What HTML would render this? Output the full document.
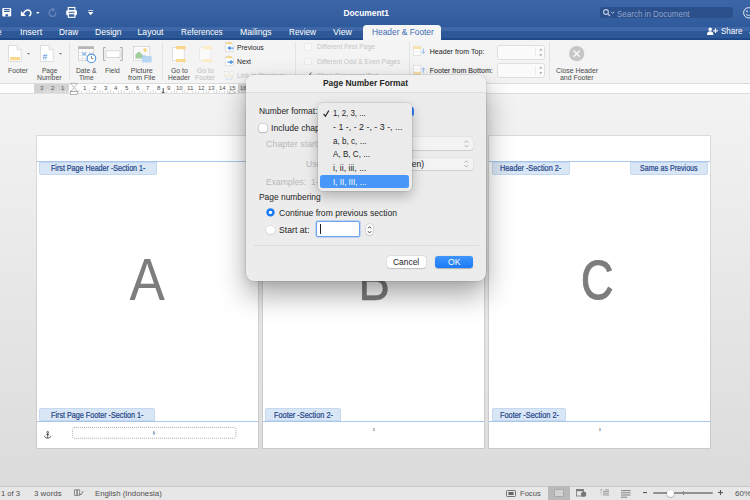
<!DOCTYPE html>
<html lang="en">
<head>
<meta charset="utf-8">
<title>Document1</title>
<style>
*{box-sizing:border-box;margin:0;padding:0}
html,body{width:750px;height:500px;overflow:hidden}
body{position:relative;background:linear-gradient(#f3f3f3 94px,#dbdbdb 486px);font-family:"Liberation Sans",sans-serif;font-size:9px;color:#222}
.abs{position:absolute}
svg{position:absolute;overflow:visible}
.t{position:absolute;white-space:pre;transform-origin:0 50%}
</style>
</head>
<body>
<div class="abs" style="left:0px;top:0px;width:750px;height:27.4px;background:linear-gradient(#3d66a8,#355f9f 62%,#2e5a9c);"></div>
<div class="abs" style="left:0px;top:27.4px;width:750px;height:12.4px;background:linear-gradient(#4068a8 0,#4068a8 3.6px,#2c5898 4px,#2c5898 11px,#1f4888 11.4px);"></div>
<div class="abs" style="left:363px;top:24.5px;width:78.2px;height:16px;background:#f5f5f5;border-radius:3.5px 3.5px 0 0"></div>
<svg style="left:0px;top:0px" width="40" height="24" viewBox="0 0 40 24"><rect x="2.3" y="8" width="8.9" height="8.5" rx="1.2" fill="#fff"/><rect x="4" y="8.9" width="5.7" height="3.1" fill="#3761a2"/><rect x="4" y="10" width="5.7" height="0.8" fill="#dfe6f2"/><rect x="5.4" y="14.2" width="2.8" height="2.3" fill="#3761a2"/></svg>
<svg style="left:0px;top:0px" width="60" height="24" viewBox="0 0 60 24"><path d="M20.9 10.9v5.2h5.2z" fill="#fff"/><path d="M23.4 13.6C24.6 10.4 28.2 8.8 30.2 11.2c1.4 1.8 0.6 3.8-1 4.8" fill="none" stroke="#fff" stroke-width="1.5"/></svg>
<svg style="left:35.6px;top:11.6px" width="3.6" height="2" viewBox="0 0 3.6 2"><path d="M0 0h3.6L1.8 2z" fill="#fff"/></svg>
<svg style="left:0px;top:0px" width="80" height="24" viewBox="0 0 80 24"><path d="M52.6 9.6A3.4 3.4 0 1 0 55.8 12.4" fill="none" stroke="#6c89bd" stroke-width="1.2"/><path d="M51.6 8.2l2.6 1.3-1.4 2.3" fill="none" stroke="#6c89bd" stroke-width="1.1"/></svg>
<svg style="left:0px;top:0px" width="100" height="24" viewBox="0 0 100 24"><rect x="66.2" y="9.9" width="10.8" height="5.6" rx="1.7" fill="#fff"/><rect x="68.3" y="7.5" width="6.6" height="3" fill="#3962a3" stroke="#fff" stroke-width="1.1"/><rect x="68.6" y="11.7" width="6" height="1.1" fill="#3962a3"/><rect x="68.3" y="13.7" width="6.6" height="3.6" fill="#3962a3" stroke="#fff" stroke-width="1.1"/></svg>
<svg style="left:88px;top:9.7px" width="5.4" height="5.4" viewBox="0 0 5.4 5.4"><rect x="0.2" y="0" width="5" height="1" fill="#c9d3e6"/><path d="M0 2h5.4L2.7 5.2z" fill="#fff"/></svg>
<span class="t" style="left:343.4px;top:7.66px;font-size:8.4px;line-height:10.08px;color:#ffffff;font-weight:bold;">Document1</span>
<div class="abs" style="left:599.5px;top:7px;width:133.5px;height:11.4px;background:#2c508c;border-radius:2.5px"></div>
<svg style="left:602.6px;top:8.8px" width="12" height="8" viewBox="0 0 12 8"><circle cx="3" cy="3" r="2.4" fill="none" stroke="#c3cee4" stroke-width="1.1"/><path d="M4.8 4.8L7 7" stroke="#c3cee4" stroke-width="1.2"/><path d="M8.2 2.8l1.5 1.6 1.5-1.6" fill="none" stroke="#c3cee4" stroke-width="0.9"/></svg>
<span class="t" style="left:617px;top:8.66px;font-size:8.4px;line-height:10.08px;color:#90a5cb;transform:scaleX(0.9566);">Search in Document</span>
<svg style="left:742.5px;top:6.6px" width="12" height="12" viewBox="0 0 12 12"><circle cx="5.8" cy="5.8" r="5.2" fill="none" stroke="#e8edf6" stroke-width="1"/><circle cx="4" cy="4.4" r="0.8" fill="#e8edf6"/><path d="M2.8 7c1.2 1.6 3.4 1.8 5 0.6" fill="none" stroke="#e8edf6" stroke-width="0.9"/></svg>
<span class="t" style="left:-3px;top:27.34px;font-size:8.6px;line-height:10.32px;color:#ffffff;transform:scaleX(0.9621);">e</span>
<span class="t" style="left:19.6px;top:27.34px;font-size:8.6px;line-height:10.32px;color:#ffffff;transform:scaleX(1.0279);">Insert</span>
<span class="t" style="left:58.5px;top:27.34px;font-size:8.6px;line-height:10.32px;color:#ffffff;transform:scaleX(0.9620);">Draw</span>
<span class="t" style="left:94.5px;top:27.34px;font-size:8.6px;line-height:10.32px;color:#ffffff;transform:scaleX(0.9901);">Design</span>
<span class="t" style="left:137.6px;top:27.34px;font-size:8.6px;line-height:10.32px;color:#ffffff;">Layout</span>
<span class="t" style="left:181.3px;top:27.34px;font-size:8.6px;line-height:10.32px;color:#ffffff;transform:scaleX(0.9487);">References</span>
<span class="t" style="left:240px;top:27.34px;font-size:8.6px;line-height:10.32px;color:#ffffff;transform:scaleX(1.0054);">Mailings</span>
<span class="t" style="left:289px;top:27.34px;font-size:8.6px;line-height:10.32px;color:#ffffff;transform:scaleX(0.9579);">Review</span>
<span class="t" style="left:333.3px;top:27.34px;font-size:8.6px;line-height:10.32px;color:#ffffff;transform:scaleX(1.0279);">View</span>
<span class="t" style="left:372px;top:27.3px;font-size:8.5px;line-height:10.2px;color:#3d6bb3;transform:scaleX(0.9834);">Header &amp; Footer</span>
<svg style="left:0px;top:0px" width="750" height="40" viewBox="0 0 750 40"><circle cx="710.2" cy="29.2" r="1.7" fill="#fff"/><path d="M707 34.9c0-2.6 1.2-3.7 3.2-3.7s3.2 1.1 3.2 3.7z" fill="#fff"/><path d="M715.5 28.5v4.6M713.2 30.8h4.6" stroke="#fff" stroke-width="1.2"/></svg>
<span class="t" style="left:720.6px;top:26.04px;font-size:8.6px;line-height:10.32px;color:#ffffff;transform:scaleX(0.9330);">Share</span>
<svg style="left:748.6px;top:29.6px" width="5" height="4" viewBox="0 0 5 4"><path d="M0.4 3.2L2.6 0.8 4.8 3.2" fill="none" stroke="#fff" stroke-width="0.9"/></svg>
<div class="abs" style="left:0px;top:39.6px;width:750px;height:44.4px;background:#f4f4f4;border-bottom:1px solid #dcdcdc"></div>
<div class="abs" style="left:69.3px;top:42px;width:1px;height:37.5px;background:#e3e3e3;"></div>
<div class="abs" style="left:162px;top:42px;width:1px;height:37.5px;background:#e3e3e3;"></div>
<div class="abs" style="left:295.4px;top:42px;width:1px;height:37.5px;background:#e3e3e3;"></div>
<div class="abs" style="left:409px;top:42px;width:1px;height:37.5px;background:#e3e3e3;"></div>
<div class="abs" style="left:549.3px;top:42px;width:1px;height:37.5px;background:#e3e3e3;"></div>
<svg style="left:8.2px;top:45.2px" width="14" height="17" viewBox="0 0 14 17"><path d="M0.5 0.5h8.5l4.3 4.3v11.7H0.5z" fill="#fff" stroke="#d9d9d9" stroke-width="0.9"/><path d="M9 0.5v4.3h4.3" fill="#f3f3f3" stroke="#d9d9d9" stroke-width="0.8"/><rect x="2" y="12" width="10" height="3.2" fill="#f8d88a"/></svg>
<svg style="left:27.3px;top:52.6px" width="3" height="1.7" viewBox="0 0 3 1.7"><path d="M0 0h3L1.5 1.7z" fill="#777"/></svg>
<span class="t" style="left:7.7px;top:66.94px;font-size:7.1px;line-height:8.52px;color:#4a4a4a;transform:scaleX(0.9700);">Footer</span>
<svg style="left:40px;top:45.2px" width="14" height="17" viewBox="0 0 14 17"><path d="M0.5 0.5h8.5l4.3 4.3v11.7H0.5z" fill="#fff" stroke="#d9d9d9" stroke-width="0.9"/><path d="M9 0.5v4.3h4.3" fill="#f3f3f3" stroke="#d9d9d9" stroke-width="0.8"/><text x="2.6" y="15" font-family="Liberation Sans,sans-serif" font-size="8.5" fill="#4a90e2">#</text></svg>
<svg style="left:59px;top:52.6px" width="3" height="1.7" viewBox="0 0 3 1.7"><path d="M0 0h3L1.5 1.7z" fill="#777"/></svg>
<span class="t" style="left:41.7px;top:66.94px;font-size:7.1px;line-height:8.52px;color:#4a4a4a;transform:scaleX(0.9229);">Page</span>
<span class="t" style="left:37px;top:73.74px;font-size:7.1px;line-height:8.52px;color:#4a4a4a;transform:scaleX(0.9749);">Number</span>
<svg style="left:78.3px;top:46px" width="18" height="17" viewBox="0 0 18 17"><rect x="0.4" y="0.4" width="15.2" height="14" fill="#fff" stroke="#cfcfcf" stroke-width="0.8"/><rect x="0.4" y="0.4" width="15.2" height="2.6" fill="#b5b5b5"/><path d="M0.4 6.4h15.2M0.4 9.6h15.2M0.4 12.6h15.2M4.2 3v11.4M8 3v11.4M11.8 3v11.4" stroke="#d8d8d8" stroke-width="0.6"/><rect x="4.4" y="6.6" width="3.4" height="2.8" fill="#8fbcf0"/><circle cx="13.4" cy="12.4" r="4.3" fill="#fff" stroke="#4a90e2" stroke-width="1.1"/><path d="M13.4 10v2.6h2" fill="none" stroke="#666" stroke-width="0.8"/></svg>
<span class="t" style="left:75.7px;top:66.94px;font-size:7.1px;line-height:8.52px;color:#4a4a4a;transform:scaleX(0.9499);">Date &amp;</span>
<span class="t" style="left:79px;top:73.74px;font-size:7.1px;line-height:8.52px;color:#4a4a4a;transform:scaleX(0.9474);">Time</span>
<svg style="left:103.3px;top:46.7px" width="20" height="14" viewBox="0 0 20 14"><path d="M2.6 0.5H0.6v13h2M17.2 0.5h2v13h-2" fill="none" stroke="#a8a8a8" stroke-width="1"/><rect x="3" y="3.8" width="14" height="6.8" fill="#fff" stroke="#cfcfcf" stroke-width="0.8"/></svg>
<span class="t" style="left:105.3px;top:66.94px;font-size:7.1px;line-height:8.52px;color:#4a4a4a;transform:scaleX(0.9551);">Field</span>
<svg style="left:132.6px;top:46.4px" width="19" height="17" viewBox="0 0 19 17"><rect x="0.4" y="0.4" width="16.4" height="13.8" fill="#fff" stroke="#d4d4d4" stroke-width="0.8"/><rect x="1.6" y="1.6" width="14" height="11.4" fill="#f7f7f7"/><path d="M2.4 12.6V8.6l3.6-3 3.4 3v4z" fill="#9fcf9a"/><circle cx="12" cy="4" r="1.7" fill="#f7d070"/><path d="M9 9.2h3.2l0.8 1h5.4v6H9z" fill="#a9cdf0"/><path d="M9 10.8h9.4v5.4H9z" fill="#b9d7f3"/></svg>
<span class="t" style="left:130.7px;top:66.94px;font-size:7.1px;line-height:8.52px;color:#4a4a4a;">Picture</span>
<span class="t" style="left:128px;top:73.74px;font-size:7.1px;line-height:8.52px;color:#4a4a4a;transform:scaleX(0.9894);">from File</span>
<svg style="left:172.3px;top:45.6px" width="14" height="16.4" viewBox="0 0 14 16.4"><rect x="0.4" y="1.4" width="11.8" height="13" fill="#fff" stroke="#d9d9d9" stroke-width="0.8"/><rect x="4" y="0" width="9.7" height="3.3" fill="#f8d88a"/><rect x="4" y="13.1" width="9.7" height="3" fill="#f8d88a"/></svg>
<span class="t" style="left:170.7px;top:66.94px;font-size:7.1px;line-height:8.52px;color:#4a4a4a;transform:scaleX(0.9620);">Go to</span>
<span class="t" style="left:168px;top:73.74px;font-size:7.1px;line-height:8.52px;color:#4a4a4a;transform:scaleX(0.9450);">Header</span>
<svg style="left:199.4px;top:45.6px" width="14" height="16.4" viewBox="0 0 14 16.4"><rect x="0.4" y="1.4" width="11.4" height="13" fill="#fafafa" stroke="#e8e8e8" stroke-width="0.8"/><rect x="3.8" y="0" width="9.6" height="3.3" fill="#fbedc8"/><rect x="3.8" y="13.1" width="9.6" height="3" fill="#fbedc8"/></svg>
<span class="t" style="left:196.7px;top:66.94px;font-size:7.1px;line-height:8.52px;color:#bdbdbd;">Go to</span>
<span class="t" style="left:195.4px;top:73.74px;font-size:7.1px;line-height:8.52px;color:#bdbdbd;transform:scaleX(0.9700);">Footer</span>
<svg style="left:224.7px;top:42px" width="9" height="10" viewBox="0 0 9 10"><path d="M0.4 0.4h5.4l2.4 2.4v6.8H0.4z" fill="#fff" stroke="#d4d4d4" stroke-width="0.7"/><rect x="1.4" y="0.4" width="5.6" height="1.8" fill="#f7d37a"/><path d="M8.4 6.8H5.4v1.7L2.2 6.1l3.2-2.4v1.7h3z" fill="#4a90e2"/></svg>
<span class="t" style="left:237.3px;top:43.54px;font-size:7.1px;line-height:8.52px;color:#262626;transform:scaleX(0.9671);">Previous</span>
<svg style="left:224.7px;top:56px" width="9" height="10" viewBox="0 0 9 10"><path d="M0.4 0.4h5.4l2.4 2.4v6.8H0.4z" fill="#fff" stroke="#d4d4d4" stroke-width="0.7"/><rect x="1.4" y="0.4" width="5.6" height="1.8" fill="#f7d37a"/><path d="M2.4 6.8h3v1.7l3.2-2.4-3.2-2.4v1.7h-3z" fill="#4a90e2"/></svg>
<span class="t" style="left:237.3px;top:58.04px;font-size:7.1px;line-height:8.52px;color:#262626;transform:scaleX(0.9593);">Next</span>
<svg style="left:224px;top:71.4px" width="10" height="9" viewBox="0 0 10 9"><rect x="0.4" y="0.4" width="3.6" height="5" fill="#fafafa" stroke="#e4e4e4" stroke-width="0.7"/><rect x="6" y="0.4" width="3.6" height="5" fill="#fafafa" stroke="#e4e4e4" stroke-width="0.7"/><rect x="0.8" y="3.4" width="2.8" height="1.4" fill="#fbecc4"/><rect x="6.4" y="3.4" width="2.8" height="1.4" fill="#fbecc4"/><path d="M2.2 6v2.4h5.6V6" fill="none" stroke="#c9def5" stroke-width="0.7"/></svg>
<span class="t" style="left:237.3px;top:71.94px;font-size:7.1px;line-height:8.52px;color:#c4c4c4;transform:scaleX(0.9448);">Link to Previous</span>
<div class="abs" style="left:304.3px;top:43.2px;width:8px;height:7.6px;background:#f8f8f8;border:0.8px solid #ebebeb;border-radius:1.5px"></div>
<div class="abs" style="left:304.3px;top:57.5px;width:8px;height:7.6px;background:#f8f8f8;border:0.8px solid #ebebeb;border-radius:1.5px"></div>
<div class="abs" style="left:304.3px;top:71.9px;width:8px;height:7.6px;background:#f8f8f8;border:0.8px solid #ebebeb;border-radius:1.5px"></div>
<span class="t" style="left:317px;top:43.34px;font-size:7.1px;line-height:8.52px;color:#c4c4c4;transform:scaleX(0.9511);">Different First Page</span>
<span class="t" style="left:317px;top:57.84px;font-size:7.1px;line-height:8.52px;color:#c4c4c4;transform:scaleX(0.9360);">Different Odd &amp; Even Pages</span>
<span class="t" style="left:317px;top:71.64px;font-size:7.1px;line-height:8.52px;color:#c4c4c4;transform:scaleX(0.9117);">Show Document Text</span>
<svg style="left:305px;top:72px" width="7" height="6" viewBox="0 0 7 6"><path d="M0.8 3.4l2 2L6.2 0.6" fill="none" stroke="#555" stroke-width="1"/></svg>
<svg style="left:413.3px;top:46.4px" width="13" height="10" viewBox="0 0 13 10"><rect x="0.4" y="0.4" width="7.4" height="9" fill="#fff" stroke="#dcdcdc" stroke-width="0.7"/><rect x="0.4" y="0.4" width="7.4" height="2.6" fill="#f9e2a6"/><path d="M0.6 5.6h7" stroke="#e6e6e6" stroke-width="0.6"/><path d="M10.4 2.6v4.6M8.8 5.6l1.6 1.8 1.6-1.8" fill="none" stroke="#8db8ee" stroke-width="0.9"/></svg>
<span class="t" style="left:429.7px;top:48.34px;font-size:7.1px;line-height:8.52px;color:#1c1c1c;">Header from Top:</span>
<svg style="left:413.3px;top:65.2px" width="13" height="10" viewBox="0 0 13 10"><rect x="0.4" y="0.4" width="7.4" height="9" fill="#fff" stroke="#dcdcdc" stroke-width="0.7"/><rect x="0.4" y="6.8" width="7.4" height="2.6" fill="#f9e2a6"/><path d="M0.6 4h7" stroke="#e6e6e6" stroke-width="0.6"/><path d="M10.4 7.6V3M8.8 4.6l1.6-1.8 1.6 1.8" fill="none" stroke="#8db8ee" stroke-width="0.9"/></svg>
<span class="t" style="left:429.7px;top:66.84px;font-size:7.1px;line-height:8.52px;color:#1c1c1c;">Footer from Bottom:</span>
<div class="abs" style="left:497.2px;top:44.5px;width:47.8px;height:15px;background:#fbfbfb;border:1px solid #dedede;border-radius:2.5px"><div class="abs" style="right:7.6px;top:1.5px;width:1px;height:9.5px;background:#ececec"></div></div>
<svg style="left:538.6px;top:47.5px" width="4" height="9" viewBox="0 0 4 9"><path d="M0.2 2.4L1.8 0.4l1.6 2z" fill="#a6a6a6"/><path d="M0.2 6.2L1.8 8.2l1.6-2z" fill="#a6a6a6"/></svg>
<div class="abs" style="left:497.2px;top:63.0px;width:47.8px;height:15px;background:#fbfbfb;border:1px solid #dedede;border-radius:2.5px"><div class="abs" style="right:7.6px;top:1.5px;width:1px;height:9.5px;background:#ececec"></div></div>
<svg style="left:538.6px;top:66.0px" width="4" height="9" viewBox="0 0 4 9"><path d="M0.2 2.4L1.8 0.4l1.6 2z" fill="#a6a6a6"/><path d="M0.2 6.2L1.8 8.2l1.6-2z" fill="#a6a6a6"/></svg>
<svg style="left:569px;top:46px" width="16" height="16" viewBox="0 0 16 16"><circle cx="7.7" cy="7.7" r="7.6" fill="#c6c6c6"/><path d="M4.6 4.6l6.2 6.2M10.8 4.6l-6.2 6.2" stroke="#fff" stroke-width="1.3"/></svg>
<span class="t" style="left:556px;top:66.94px;font-size:7.1px;line-height:8.52px;color:#4a4a4a;transform:scaleX(0.9683);">Close Header</span>
<span class="t" style="left:560px;top:73.74px;font-size:7.1px;line-height:8.52px;color:#4a4a4a;transform:scaleX(0.9763);">and Footer</span>
<div class="abs" style="left:0px;top:84px;width:750px;height:10px;background:#fdfdfd;border-bottom:1px solid #dedede"></div>
<div class="abs" style="left:34.4px;top:84px;width:35px;height:9.4px;background:#d3d3d3;"></div>
<div class="abs" style="left:238.3px;top:84px;width:20px;height:9.4px;background:#d3d3d3;"></div>
<svg style="left:0px;top:0px" width="750" height="100" viewBox="0 0 750 100"><rect x="44.10" y="91.00" width="0.7" height="2.2" fill="#f2f2f2"/><rect x="46.75" y="89.60" width="0.7" height="3.6" fill="#f2f2f2"/><rect x="49.40" y="91.00" width="0.7" height="2.2" fill="#f2f2f2"/><rect x="54.70" y="91.00" width="0.7" height="2.2" fill="#f2f2f2"/><rect x="57.35" y="89.60" width="0.7" height="3.6" fill="#f2f2f2"/><rect x="60.00" y="91.00" width="0.7" height="2.2" fill="#f2f2f2"/><rect x="65.30" y="91.00" width="0.7" height="2.2" fill="#f2f2f2"/><rect x="67.95" y="89.60" width="0.7" height="3.6" fill="#f2f2f2"/><rect x="70.60" y="91.00" width="0.7" height="2.2" fill="#cdcdcd"/><rect x="75.90" y="91.00" width="0.7" height="2.2" fill="#cdcdcd"/><rect x="78.55" y="89.60" width="0.7" height="3.6" fill="#cdcdcd"/><rect x="81.20" y="91.00" width="0.7" height="2.2" fill="#cdcdcd"/><rect x="86.50" y="91.00" width="0.7" height="2.2" fill="#cdcdcd"/><rect x="89.15" y="89.60" width="0.7" height="3.6" fill="#cdcdcd"/><rect x="91.80" y="91.00" width="0.7" height="2.2" fill="#cdcdcd"/><rect x="97.10" y="91.00" width="0.7" height="2.2" fill="#cdcdcd"/><rect x="99.75" y="89.60" width="0.7" height="3.6" fill="#cdcdcd"/><rect x="102.40" y="91.00" width="0.7" height="2.2" fill="#cdcdcd"/><rect x="107.70" y="91.00" width="0.7" height="2.2" fill="#cdcdcd"/><rect x="110.35" y="89.60" width="0.7" height="3.6" fill="#cdcdcd"/><rect x="113.00" y="91.00" width="0.7" height="2.2" fill="#cdcdcd"/><rect x="118.30" y="91.00" width="0.7" height="2.2" fill="#cdcdcd"/><rect x="120.95" y="89.60" width="0.7" height="3.6" fill="#cdcdcd"/><rect x="123.60" y="91.00" width="0.7" height="2.2" fill="#cdcdcd"/><rect x="128.90" y="91.00" width="0.7" height="2.2" fill="#cdcdcd"/><rect x="131.55" y="89.60" width="0.7" height="3.6" fill="#cdcdcd"/><rect x="134.20" y="91.00" width="0.7" height="2.2" fill="#cdcdcd"/><rect x="139.50" y="91.00" width="0.7" height="2.2" fill="#cdcdcd"/><rect x="142.15" y="89.60" width="0.7" height="3.6" fill="#cdcdcd"/><rect x="144.80" y="91.00" width="0.7" height="2.2" fill="#cdcdcd"/><rect x="150.10" y="91.00" width="0.7" height="2.2" fill="#cdcdcd"/><rect x="152.75" y="89.60" width="0.7" height="3.6" fill="#cdcdcd"/><rect x="155.40" y="91.00" width="0.7" height="2.2" fill="#cdcdcd"/><rect x="160.70" y="91.00" width="0.7" height="2.2" fill="#cdcdcd"/><rect x="163.35" y="89.60" width="0.7" height="3.6" fill="#cdcdcd"/><rect x="166.00" y="91.00" width="0.7" height="2.2" fill="#cdcdcd"/><rect x="171.30" y="91.00" width="0.7" height="2.2" fill="#cdcdcd"/><rect x="173.95" y="89.60" width="0.7" height="3.6" fill="#cdcdcd"/><rect x="176.60" y="91.00" width="0.7" height="2.2" fill="#cdcdcd"/><rect x="181.90" y="91.00" width="0.7" height="2.2" fill="#cdcdcd"/><rect x="184.55" y="89.60" width="0.7" height="3.6" fill="#cdcdcd"/><rect x="187.20" y="91.00" width="0.7" height="2.2" fill="#cdcdcd"/><rect x="192.50" y="91.00" width="0.7" height="2.2" fill="#cdcdcd"/><rect x="195.15" y="89.60" width="0.7" height="3.6" fill="#cdcdcd"/><rect x="197.80" y="91.00" width="0.7" height="2.2" fill="#cdcdcd"/><rect x="203.10" y="91.00" width="0.7" height="2.2" fill="#cdcdcd"/><rect x="205.75" y="89.60" width="0.7" height="3.6" fill="#cdcdcd"/><rect x="208.40" y="91.00" width="0.7" height="2.2" fill="#cdcdcd"/><rect x="213.70" y="91.00" width="0.7" height="2.2" fill="#cdcdcd"/><rect x="216.35" y="89.60" width="0.7" height="3.6" fill="#cdcdcd"/><rect x="219.00" y="91.00" width="0.7" height="2.2" fill="#cdcdcd"/><rect x="224.30" y="91.00" width="0.7" height="2.2" fill="#cdcdcd"/><rect x="226.95" y="89.60" width="0.7" height="3.6" fill="#cdcdcd"/><rect x="229.60" y="91.00" width="0.7" height="2.2" fill="#cdcdcd"/><rect x="234.90" y="91.00" width="0.7" height="2.2" fill="#cdcdcd"/><rect x="237.55" y="89.60" width="0.7" height="3.6" fill="#cdcdcd"/><rect x="240.20" y="91.00" width="0.7" height="2.2" fill="#f2f2f2"/><rect x="245.50" y="91.00" width="0.7" height="2.2" fill="#f2f2f2"/><rect x="248.15" y="89.60" width="0.7" height="3.6" fill="#f2f2f2"/><rect x="250.80" y="91.00" width="0.7" height="2.2" fill="#f2f2f2"/></svg>
<span class="t" style="left:40.1px;top:84.7px;font-size:6.0px;line-height:7.2px;color:#555;transform:scaleX(1.0168);">3</span>
<span class="t" style="left:50.7px;top:84.7px;font-size:6.0px;line-height:7.2px;color:#555;transform:scaleX(1.0168);">2</span>
<span class="t" style="left:61.3px;top:84.7px;font-size:6.0px;line-height:7.2px;color:#555;transform:scaleX(1.0168);">1</span>
<span class="t" style="left:82.5px;top:84.7px;font-size:6.0px;line-height:7.2px;color:#555;transform:scaleX(1.0168);">1</span>
<span class="t" style="left:93.1px;top:84.7px;font-size:6.0px;line-height:7.2px;color:#555;transform:scaleX(1.0168);">2</span>
<span class="t" style="left:103.7px;top:84.7px;font-size:6.0px;line-height:7.2px;color:#555;transform:scaleX(1.0168);">3</span>
<span class="t" style="left:114.3px;top:84.7px;font-size:6.0px;line-height:7.2px;color:#555;transform:scaleX(1.0168);">4</span>
<span class="t" style="left:124.9px;top:84.7px;font-size:6.0px;line-height:7.2px;color:#555;transform:scaleX(1.0168);">5</span>
<span class="t" style="left:135.5px;top:84.7px;font-size:6.0px;line-height:7.2px;color:#555;transform:scaleX(1.0168);">6</span>
<span class="t" style="left:146.1px;top:84.7px;font-size:6.0px;line-height:7.2px;color:#555;transform:scaleX(1.0168);">7</span>
<span class="t" style="left:156.7px;top:84.7px;font-size:6.0px;line-height:7.2px;color:#555;transform:scaleX(1.0168);">8</span>
<span class="t" style="left:167.3px;top:84.7px;font-size:6.0px;line-height:7.2px;color:#555;transform:scaleX(1.0168);">9</span>
<span class="t" style="left:176.3px;top:84.7px;font-size:6.0px;line-height:7.2px;color:#555;transform:scaleX(0.9869);">10</span>
<span class="t" style="left:186.9px;top:84.7px;font-size:6.0px;line-height:7.2px;color:#555;transform:scaleX(1.0586);">11</span>
<span class="t" style="left:197.5px;top:84.7px;font-size:6.0px;line-height:7.2px;color:#555;transform:scaleX(0.9869);">12</span>
<span class="t" style="left:208.1px;top:84.7px;font-size:6.0px;line-height:7.2px;color:#555;transform:scaleX(0.9869);">13</span>
<span class="t" style="left:218.7px;top:84.7px;font-size:6.0px;line-height:7.2px;color:#555;transform:scaleX(0.9869);">14</span>
<span class="t" style="left:229.3px;top:84.7px;font-size:6.0px;line-height:7.2px;color:#555;transform:scaleX(0.9869);">15</span>
<span class="t" style="left:239.9px;top:84.7px;font-size:6.0px;line-height:7.2px;color:#555;transform:scaleX(0.9869);">16</span>
<svg style="left:69.6px;top:83px" width="9" height="12" viewBox="0 0 9 12"><path d="M0.6 0.4h7L4.1 4.4z" fill="#fff" stroke="#8a8a8a" stroke-width="0.6"/><path d="M0.6 8.4L4.1 4.6l3.5 3.8z" fill="#fff" stroke="#8a8a8a" stroke-width="0.6"/><rect x="0.6" y="8.6" width="7" height="3" fill="#fff" stroke="#8a8a8a" stroke-width="0.6"/></svg>
<svg style="left:228px;top:88.6px" width="8" height="5" viewBox="0 0 8 5"><path d="M0.4 4.4L3.8 0.6l3.4 3.8z" fill="#fff" stroke="#9a9a9a" stroke-width="0.6"/></svg>
<svg style="left:161.6px;top:88px" width="3" height="5" viewBox="0 0 3 5"><path d="M1.2 0v4.6M0 4.6h2.6" stroke="#444" stroke-width="0.9"/></svg>
<div class="abs" style="left:36.5px;top:135.6px;width:221.4px;height:312.3px;background:#fff;box-shadow:0 0 0 0.7px rgba(0,0,0,.13)"></div>
<div class="abs" style="left:36.5px;top:161.1px;width:221.4px;height:0.9px;background:#a9c7ec;"></div>
<div class="abs" style="left:36.5px;top:420.7px;width:221.4px;height:0.9px;background:#a9c7ec;"></div>
<div class="abs" style="left:262.6px;top:135.6px;width:221.4px;height:312.3px;background:#fff;box-shadow:0 0 0 0.7px rgba(0,0,0,.13)"></div>
<div class="abs" style="left:262.6px;top:161.1px;width:221.4px;height:0.9px;background:#a9c7ec;"></div>
<div class="abs" style="left:262.6px;top:420.7px;width:221.4px;height:0.9px;background:#a9c7ec;"></div>
<div class="abs" style="left:488.8px;top:135.6px;width:221.4px;height:312.3px;background:#fff;box-shadow:0 0 0 0.7px rgba(0,0,0,.13)"></div>
<div class="abs" style="left:488.8px;top:161.1px;width:221.4px;height:0.9px;background:#a9c7ec;"></div>
<div class="abs" style="left:488.8px;top:420.7px;width:221.4px;height:0.9px;background:#a9c7ec;"></div>
<div class="abs" style="left:39.2px;top:161.8px;width:117.8px;height:12.9px;background:#d9e6f5;border:0.8px solid #c4d8ef;border-radius:0 0 2px 2px"></div>
<span class="t" style="left:50.6px;top:163.83px;font-size:8.2px;line-height:9.84px;color:#27468a;transform:scaleX(0.8716);-webkit-text-stroke:0.22px #27468a;">First Page Header -Section 1-</span>
<div class="abs" style="left:492.2px;top:161.8px;width:77.4px;height:12.9px;background:#d9e6f5;border:0.8px solid #c4d8ef;border-radius:0 0 2px 2px"></div>
<span class="t" style="left:499.8px;top:163.83px;font-size:8.2px;line-height:9.84px;color:#27468a;transform:scaleX(0.8906);-webkit-text-stroke:0.22px #27468a;">Header -Section 2-</span>
<div class="abs" style="left:630.4px;top:161.8px;width:77.4px;height:12.9px;background:#d9e6f5;border:0.8px solid #c4d8ef;border-radius:0 0 2px 2px"></div>
<span class="t" style="left:640px;top:163.83px;font-size:8.2px;line-height:9.84px;color:#27468a;transform:scaleX(0.8668);-webkit-text-stroke:0.22px #27468a;">Same as Previous</span>
<div class="abs" style="left:39.2px;top:408.2px;width:115.4px;height:13.0px;background:#d9e6f5;border:0.8px solid #c4d8ef;border-radius:2px 2px 0 0"></div>
<span class="t" style="left:50.6px;top:410.58px;font-size:8.2px;line-height:9.84px;color:#27468a;transform:scaleX(0.8790);-webkit-text-stroke:0.22px #27468a;">First Page Footer -Section 1-</span>
<div class="abs" style="left:265px;top:408.2px;width:76px;height:13.0px;background:#d9e6f5;border:0.8px solid #c4d8ef;border-radius:2px 2px 0 0"></div>
<span class="t" style="left:273.5px;top:410.58px;font-size:8.2px;line-height:9.84px;color:#27468a;transform:scaleX(0.9003);-webkit-text-stroke:0.22px #27468a;">Footer -Section 2-</span>
<div class="abs" style="left:491.6px;top:408.2px;width:74.9px;height:13.0px;background:#d9e6f5;border:0.8px solid #c4d8ef;border-radius:2px 2px 0 0"></div>
<span class="t" style="left:500px;top:410.58px;font-size:8.2px;line-height:9.84px;color:#27468a;transform:scaleX(0.9003);-webkit-text-stroke:0.22px #27468a;">Footer -Section 2-</span>
<svg style="left:0;top:0" width="750" height="500"><text x="0" y="0" transform="translate(129.50,300.00) scale(0.9421,1.0605)" font-family="Liberation Sans,sans-serif" font-size="56.28" fill="#7d7d7d">A</text></svg>
<svg style="left:0;top:0" width="750" height="500"><text x="0" y="0" transform="translate(358.19,299.50) scale(0.8516,1.0421)" font-family="Liberation Sans,sans-serif" font-size="55.87" fill="#7d7d7d" stroke="#7d7d7d" stroke-width="0.422" stroke-linejoin="round">B</text></svg>
<svg style="left:0;top:0" width="750" height="500"><text x="0" y="0" transform="translate(581.00,298.99) scale(0.7737,0.9643)" font-family="Liberation Sans,sans-serif" font-size="58.1" fill="#7d7d7d" stroke="#7d7d7d" stroke-width="1.266" stroke-linejoin="round">C</text></svg>
<svg style="left:44px;top:431.2px" width="8" height="8" viewBox="0 0 8 8"><circle cx="3.7" cy="1.3" r="0.9" fill="none" stroke="#333" stroke-width="0.7"/><path d="M3.7 2.2v4.8M2.2 3.4h3M0.6 4.8c0.2 1.6 1.4 2.4 3.1 2.4s2.9-0.8 3.1-2.4" fill="none" stroke="#333" stroke-width="0.8"/></svg>
<svg style="left:71.6px;top:427.4px" width="164.4" height="11.6" viewBox="0 0 164.4 11.6"><rect x="0.4" y="0.4" width="163.6" height="10.8" rx="1.5" fill="none" stroke="#8c8c8c" stroke-width="0.8" stroke-dasharray="0.9 1.1"/></svg>
<div class="abs" style="left:152.8px;top:431.6px;width:2.6px;height:3.6px;background:#b9d2f3;"></div>
<span class="t" style="left:153.3px;top:431.36px;font-size:3.4px;line-height:4.08px;color:#333;font-weight:bold;transform:scaleX(0.8463);">1</span>
<span class="t" style="left:372.8px;top:428.16px;font-size:3.4px;line-height:4.08px;color:#444;font-weight:bold;transform:scaleX(0.8463);">2</span>
<span class="t" style="left:598.8px;top:428.16px;font-size:3.4px;line-height:4.08px;color:#444;font-weight:bold;transform:scaleX(0.8463);">3</span>
<div class="abs" style="left:0px;top:485.6px;width:750px;height:14.4px;background:#e7e7e7;border-top:1px solid #c9c9c9"></div>
<span class="t" style="left:1.3px;top:488.72px;font-size:7.8px;line-height:9.36px;color:#505050;transform:scaleX(0.9736);">1 of 3</span>
<span class="t" style="left:33.7px;top:488.72px;font-size:7.8px;line-height:9.36px;color:#505050;transform:scaleX(1.0105);">3 words</span>
<svg style="left:73.5px;top:489.4px" width="10" height="8" viewBox="0 0 10 8"><path d="M0.5 0.8h2.6v5.6H0.5zM3.1 0.8h2.6v5.6H3.1z" fill="none" stroke="#666" stroke-width="0.7"/><path d="M5.4 4.4l1.4 1.6L9.4 2" fill="none" stroke="#666" stroke-width="0.8"/></svg>
<span class="t" style="left:95px;top:488.72px;font-size:7.8px;line-height:9.36px;color:#505050;">English (Indonesia)</span>
<svg style="left:506px;top:490px" width="10" height="7" viewBox="0 0 10 7"><rect x="0.5" y="0.5" width="9" height="6" rx="0.8" fill="none" stroke="#666" stroke-width="0.9"/><rect x="2.4" y="2" width="5.2" height="3" fill="#666"/></svg>
<span class="t" style="left:520px;top:488.72px;font-size:7.8px;line-height:9.36px;color:#505050;transform:scaleX(0.9748);">Focus</span>
<div class="abs" style="left:548.3px;top:486.4px;width:21.7px;height:13.6px;background:#b9b9b9;"></div>
<div class="abs" style="left:554.3px;top:489.3px;width:9.7px;height:8px;background:#d2d2d2;border:0.7px solid #a9a9a9;border-radius:1px"></div>
<svg style="left:576px;top:489.4px" width="11" height="8" viewBox="0 0 11 8"><rect x="0.4" y="0.4" width="7" height="6.6" fill="none" stroke="#777" stroke-width="0.8"/><rect x="0.4" y="0.4" width="7" height="1.8" fill="#777"/><circle cx="7.6" cy="5.2" r="2.6" fill="#777"/></svg>
<svg style="left:600px;top:489.4px" width="10" height="8" viewBox="0 0 10 8"><path d="M0.4 0.8h2M3 2.4h6M3 4.2h6M3 6h6M5 0.8h4" stroke="#8a8a8a" stroke-width="0.8"/><path d="M1 1.6v4.8" stroke="#8a8a8a" stroke-width="0.6" stroke-dasharray="0.8 0.8"/></svg>
<svg style="left:621px;top:489.6px" width="10" height="8" viewBox="0 0 10 8"><path d="M0 0.6h9.6M0 2.8h9.6M0 5h9.6M0 7.2h6" stroke="#777" stroke-width="0.9"/></svg>
<svg style="left:642.7px;top:492.4px" width="4" height="1.2" viewBox="0 0 4 1.2"><rect width="4" height="1.1" fill="#555"/></svg>
<div class="abs" style="left:652.7px;top:492.2px;width:60.6px;height:1.6px;background:#929292;border-radius:1px"></div>
<div class="abs" style="left:682.5px;top:491.4px;width:1px;height:3.2px;background:#8a8a8a;"></div>
<div class="abs" style="left:667.2px;top:489.5px;width:7px;height:7px;background:#fff;border-radius:50%;box-shadow:0 0.4px 1.2px rgba(0,0,0,.45)"></div>
<svg style="left:718.3px;top:490.4px" width="5" height="5" viewBox="0 0 5 5"><path d="M0 2.5h5M2.5 0v5" stroke="#555" stroke-width="1.1"/></svg>
<span class="t" style="left:735px;top:488.72px;font-size:7.8px;line-height:9.36px;color:#505050;transform:scaleX(1.0250);">60%</span>
<div class="abs" style="left:246.4px;top:75.4px;width:239.4px;height:205.2px;background:#ececec;border-radius:8px;box-shadow:0 0 0 0.6px rgba(0,0,0,.13),0 14px 28px rgba(0,0,0,.34),0 2px 8px rgba(0,0,0,.09)"></div>
<div class="abs" style="left:246.4px;top:75.4px;width:239.4px;height:17.2px;background:#f1f1f1;border-radius:8px 8px 0 0;border-bottom:1px solid #dcdcdc"></div>
<span class="t" style="left:323.4px;top:77.52px;font-size:8.8px;line-height:10.56px;color:#262626;font-weight:bold;transform:scaleX(0.9554);">Page Number Format</span>
<span class="t" style="left:259px;top:105.92px;font-size:8.8px;line-height:10.56px;color:#242424;transform:scaleX(0.9557);">Number format:</span>
<div class="abs" style="left:400px;top:106.6px;width:14px;height:9.6px;background:#2f7df6;border-radius:2.5px"></div>
<div class="abs" style="left:259px;top:123.6px;width:8.4px;height:8.4px;background:#fff;border-radius:2px;box-shadow:0 0 0 0.6px rgba(0,0,0,.18),0 0.5px 1px rgba(0,0,0,.12)"></div>
<span class="t" style="left:271.4px;top:122.82px;font-size:8.8px;line-height:10.56px;color:#242424;transform:scaleX(0.9801);">Include chapter number</span>
<span class="t" style="left:266.4px;top:138.52px;font-size:8.8px;line-height:10.56px;color:#b9b9b9;transform:scaleX(1.0134);">Chapter starts with style:</span>
<span class="t" style="left:305.6px;top:158.52px;font-size:8.8px;line-height:10.56px;color:#b9b9b9;transform:scaleX(0.9774);">Use separator:</span>
<span class="t" style="left:266.4px;top:176.52px;font-size:8.8px;line-height:10.56px;color:#b9b9b9;transform:scaleX(0.9786);">Examples:  1-1, 1-A</span>
<div class="abs" style="left:368px;top:137.4px;width:105px;height:12.3px;background:#f3f3f3;border-radius:3px;box-shadow:0 0 0 0.5px rgba(0,0,0,.06),0 0.5px 0.8px rgba(0,0,0,.10)"></div>
<svg style="left:464.4px;top:139.8px" width="5" height="8" viewBox="0 0 5 8"><path d="M0.6 2.6L2.4 0.8l1.8 1.8M0.6 5.2L2.4 7l1.8-1.8" fill="none" stroke="#a9a9a9" stroke-width="0.9"/></svg>
<div class="abs" style="left:368px;top:157.7px;width:105px;height:12.3px;background:#f3f3f3;border-radius:3px;box-shadow:0 0 0 0.5px rgba(0,0,0,.06),0 0.5px 0.8px rgba(0,0,0,.10)"></div>
<svg style="left:464.4px;top:160.1px" width="5" height="8" viewBox="0 0 5 8"><path d="M0.6 2.6L2.4 0.8l1.8 1.8M0.6 5.2L2.4 7l1.8-1.8" fill="none" stroke="#a9a9a9" stroke-width="0.9"/></svg>
<span class="t" style="left:385px;top:159.32px;font-size:8.8px;line-height:10.56px;color:#242424;transform:scaleX(0.9727);">- (hyphen)</span>
<span class="t" style="left:258.7px;top:192.22px;font-size:8.8px;line-height:10.56px;color:#242424;transform:scaleX(0.9557);">Page numbering</span>
<svg style="left:266px;top:208px" width="9" height="9" viewBox="0 0 9 9"><circle cx="4.5" cy="4.4" r="4.2" fill="#1b7af5"/><circle cx="4.5" cy="4.4" r="1.7" fill="#fff"/></svg>
<span class="t" style="left:279px;top:207.82px;font-size:8.8px;line-height:10.56px;color:#242424;transform:scaleX(0.9731);">Continue from previous section</span>
<div class="abs" style="left:266.4px;top:225.6px;width:8.4px;height:8.4px;border-radius:50%;background:#fff;box-shadow:0 0 0 0.6px rgba(0,0,0,.1),0 0.5px 1px rgba(0,0,0,.12)"></div>
<span class="t" style="left:279px;top:224.72px;font-size:8.8px;line-height:10.56px;color:#242424;transform:scaleX(0.9866);">Start at:</span>
<div class="abs" style="left:316.3px;top:221.2px;width:44.2px;height:15.7px;background:#fff;border:1.6px solid #6ea4ef;border-radius:2px;box-shadow:0 0 0 0.8px rgba(110,164,239,.45)"></div>
<div class="abs" style="left:319.6px;top:223.6px;width:0.8px;height:10.6px;background:#222;"></div>
<div class="abs" style="left:365.9px;top:223.6px;width:7.2px;height:11.6px;background:#fff;border-radius:3.6px;box-shadow:0 0 0 0.5px rgba(0,0,0,.15),0 0.5px 1px rgba(0,0,0,.18)"></div>
<svg style="left:365.9px;top:223.6px" width="7.2" height="11.6" viewBox="0 0 7.2 11.6"><path d="M2 4.4L3.6 2.6 5.2 4.4M2 7.2L3.6 9 5.2 7.2" fill="none" stroke="#333" stroke-width="0.9"/></svg>
<div class="abs" style="left:253.7px;top:244.8px;width:225px;height:1px;background:#dcdcdc;"></div>
<div class="abs" style="left:387.2px;top:256.4px;width:38.4px;height:11.8px;background:#fff;border-radius:3px;box-shadow:0 0 0 0.5px rgba(0,0,0,.06),0 0.6px 1.2px rgba(0,0,0,.16)"></div>
<span class="t" style="left:393.3px;top:257.02px;font-size:8.8px;line-height:10.56px;color:#242424;transform:scaleX(0.9565);">Cancel</span>
<div class="abs" style="left:434.5px;top:255.8px;width:38.6px;height:12.4px;background:linear-gradient(#3f95fb,#1b7bf6);border-radius:3px;box-shadow:0 0.5px 1px rgba(0,0,0,.25)"></div>
<span class="t" style="left:447.6px;top:256.92px;font-size:8.8px;line-height:10.56px;color:#fff;transform:scaleX(0.9749);">OK</span>
<div class="abs" style="left:317.8px;top:102.6px;width:94.4px;height:88px;background:#ebebeb;border-radius:4.5px;box-shadow:0 0 0 0.6px rgba(0,0,0,.14),0 5px 13px rgba(0,0,0,.26)"></div>
<div class="abs" style="left:320.4px;top:175px;width:89px;height:13px;background:#4896f8;border-radius:2.5px"></div>
<svg style="left:323px;top:109.6px" width="7" height="7" viewBox="0 0 7 7"><path d="M0.6 3.8l1.8 2.4L5.8 0.6" fill="none" stroke="#222" stroke-width="1.1"/></svg>
<span class="t" style="left:332.6px;top:107.92px;font-size:8.8px;line-height:10.56px;color:#242424;transform:scaleX(0.8940);">1, 2, 3, ...</span>
<span class="t" style="left:332.6px;top:121.52px;font-size:8.8px;line-height:10.56px;color:#242424;transform:scaleX(1.0069);">- 1 -, - 2 -, - 3 -, ...</span>
<span class="t" style="left:332.6px;top:135.52px;font-size:8.8px;line-height:10.56px;color:#242424;transform:scaleX(0.9230);">a, b, c, ...</span>
<span class="t" style="left:332.6px;top:149.12px;font-size:8.8px;line-height:10.56px;color:#242424;transform:scaleX(0.9228);">A, B, C, ...</span>
<span class="t" style="left:332.6px;top:162.92px;font-size:8.8px;line-height:10.56px;color:#242424;transform:scaleX(0.9901);">i, ii, iii, ...</span>
<span class="t" style="left:332.6px;top:176.72px;font-size:8.8px;line-height:10.56px;color:#fff;transform:scaleX(0.9108);">I, II, III, ...</span>
</body>
</html>
